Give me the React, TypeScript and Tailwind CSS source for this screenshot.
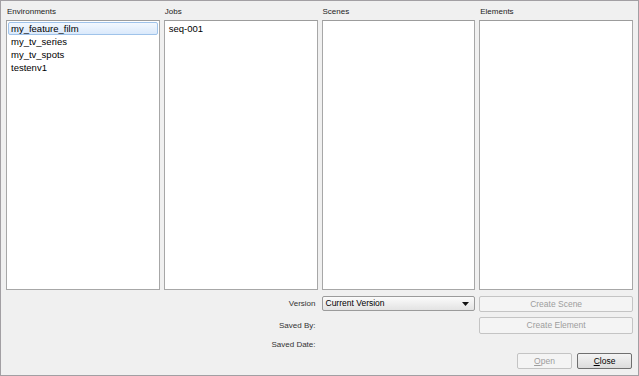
import React from 'react';

const font = "font-['Liberation_Sans',Arial,sans-serif]";

const columns: { title: string; items: string[]; selected?: number }[] = [
  { title: 'Environments', items: ['my_feature_film', 'my_tv_series', 'my_tv_spots', 'testenv1'], selected: 0 },
  { title: 'Jobs', items: ['seq-001'] },
  { title: 'Scenes', items: [] },
  { title: 'Elements', items: [] },
];

const ListColumn = ({ title, items, selected }: { title: string; items: string[]; selected?: number }) => (
  <div className="flex flex-col min-w-0">
    <div className="h-[16px] leading-[16px] text-[8px] text-[#222] pl-[1px]">{title}</div>
    <div className="h-[270px] bg-white border border-[#a7a7a7] border-t-[#9c9c9c] p-[1px]">
      {items.map((item, i) => (
        <div
          key={item}
          className={`h-[13px] leading-[12px] text-[9.5px] text-black pl-[2px] rounded-[2px] border ${
            i === selected
              ? 'bg-gradient-to-b from-[#f3f8fe] to-[#dae9fb] border-[#9fc3ea]'
              : 'border-transparent'
          }`}
        >
          {item}
        </div>
      ))}
    </div>
  </div>
);

const Button = ({
  children,
  disabled,
  className = '',
}: {
  children: React.ReactNode;
  disabled?: boolean;
  className?: string;
}) => (
  <div
    className={`flex items-center justify-center rounded-[2px] border text-[8.5px] ${
      disabled
        ? 'border-[#c4c4c4] bg-[#f4f4f4] text-[#9d9d9d]'
        : 'border-[#6f6f6f] bg-gradient-to-b from-[#f4f4f4] to-[#dcdcdc] text-black'
    } ${className}`}
  >
    {children}
  </div>
);

export default function App() {
  return (
    <div className={`${font} w-[639px] h-[376px] bg-[#f0f0f0] border border-[#a29fa3] px-[5px] pt-[3px] flex flex-col`}>
      <div className="grid grid-cols-4 gap-x-[4px]">
        {columns.map((c) => (
          <ListColumn key={c.title} {...c} />
        ))}
      </div>

      {/* Version / buttons */}
      <div className="grid grid-cols-4 gap-x-[4px] mt-[6px] text-[8px] text-[#333]">
        <div />
        <div className="h-[16px] flex items-center justify-end pr-[2px]">Version</div>
        <div className="h-[15px] flex items-center justify-between rounded-[2px] border border-[#9b9b9b] bg-gradient-to-b from-[#fbfbfb] to-[#e3e3e3] pl-[3px] pr-[5px] text-black text-[8.5px]">
          <span>Current Version</span>
          <svg width="7" height="4" viewBox="0 0 7 4">
            <path d="M0 0h7L3.5 4z" fill="#111" />
          </svg>
        </div>
        <Button disabled className="h-[16px]">Create Scene</Button>

        <div />
        <div className="h-[17px] mt-[5px] flex items-center justify-end pr-[2px]">Saved By:</div>
        <div />
        <Button disabled className="h-[17px] mt-[5px]">Create Element</Button>

        <div />
        <div className="h-[13px] mt-[4px] flex items-center justify-end pr-[2px]">Saved Date:</div>
        <div />
        <div />
      </div>

      <div className="flex justify-end gap-[5px] mt-[2px] pr-[1px]">
        <Button disabled className="w-[55px] h-[16px]">
          <span><u>O</u>pen</span>
        </Button>
        <Button className="w-[55px] h-[16px]">
          <span><u>C</u>lose</span>
        </Button>
      </div>
    </div>
  );
}
